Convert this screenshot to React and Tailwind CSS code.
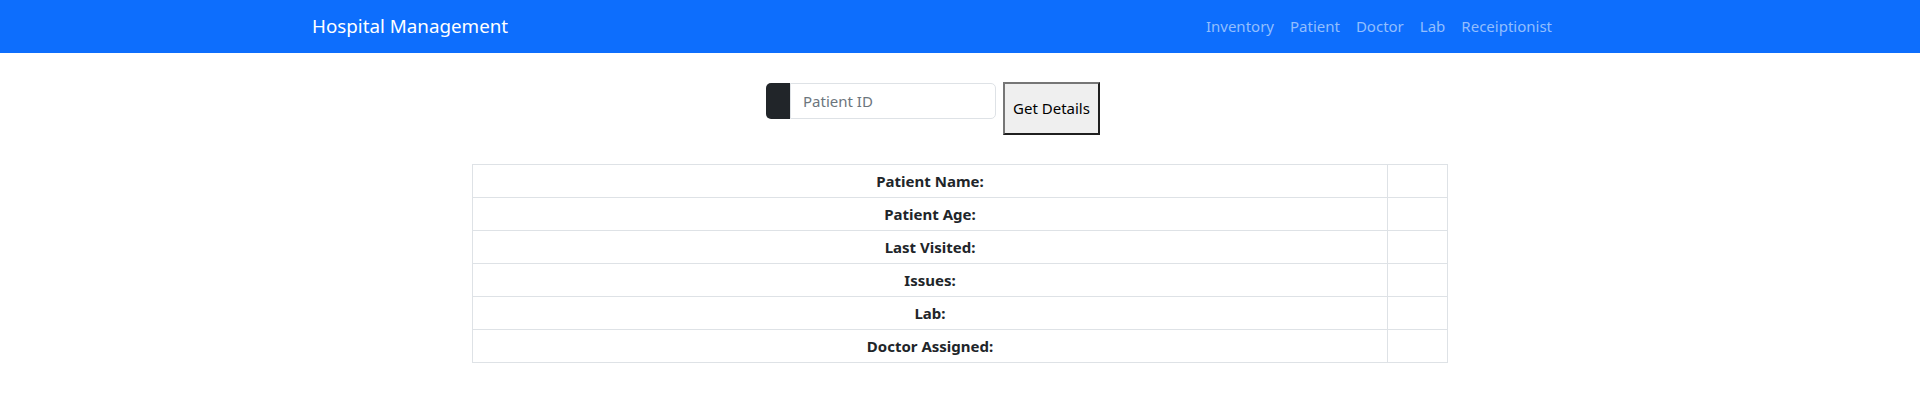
const links = ["Inventory", "Patient", "Doctor", "Lab", "Receiptionist"];

const fields = [
  "Patient Name:",
  "Patient Age:",
  "Last Visited:",
  "Issues:",
  "Lab:",
  "Doctor Assigned:",
];

export default function App() {
  return (
    <div className="min-h-[404px] bg-white font-['Noto_Sans',_'Open_Sans',_sans-serif] text-[#212529]">
      {/* Navbar */}
      <nav className="h-[53px] bg-[#0d6efd]">
        <div className="mx-auto flex h-full max-w-[1320px] items-center justify-between px-3">
          <a href="#" className="text-[18.8px] leading-none text-white">
            Hospital Management
          </a>
          <ul className="mr-[48px] flex items-center">
            {links.map((l) => (
              <li key={l}>
                <a href="#" className="block px-2 text-[15px] text-[#92befe]">
                  {l}
                </a>
              </li>
            ))}
          </ul>
        </div>
      </nav>

      {/* Search */}
      <div className="mt-[29px] flex justify-center">
        <div className="mr-[54px] flex items-start gap-[7px]">
          <div className="mt-px flex h-[36px]">
            <span className="w-[24px] rounded-l-[5px] bg-[#212529]" />
            <input
              type="text"
              placeholder="Patient ID"
              className="w-[206px] rounded-r-[5px] border border-[#dee2e6] px-3 text-[15px] text-[#212529] outline-none placeholder:text-[#6c757d]"
            />
          </div>
          <button className="h-[53px] w-[97px] border-2 border-t-[#767676] border-l-[#767676] border-b-[#1f1f1f] border-r-[#1f1f1f] bg-[#efefef] text-[15px] text-black">
            Get Details
          </button>
        </div>
      </div>

      {/* Details table */}
      <div className="mt-[29px] flex justify-center">
        <table className="w-[976px] border-collapse border border-[#dee2e6]">
          <tbody>
            {fields.map((f) => (
              <tr key={f} className="h-[33px]">
                <td className="border border-[#dee2e6] text-center text-[15px] font-bold">
                  {f}
                </td>
                <td className="w-[60px] border border-[#dee2e6]" />
              </tr>
            ))}
          </tbody>
        </table>
      </div>
    </div>
  );
}
